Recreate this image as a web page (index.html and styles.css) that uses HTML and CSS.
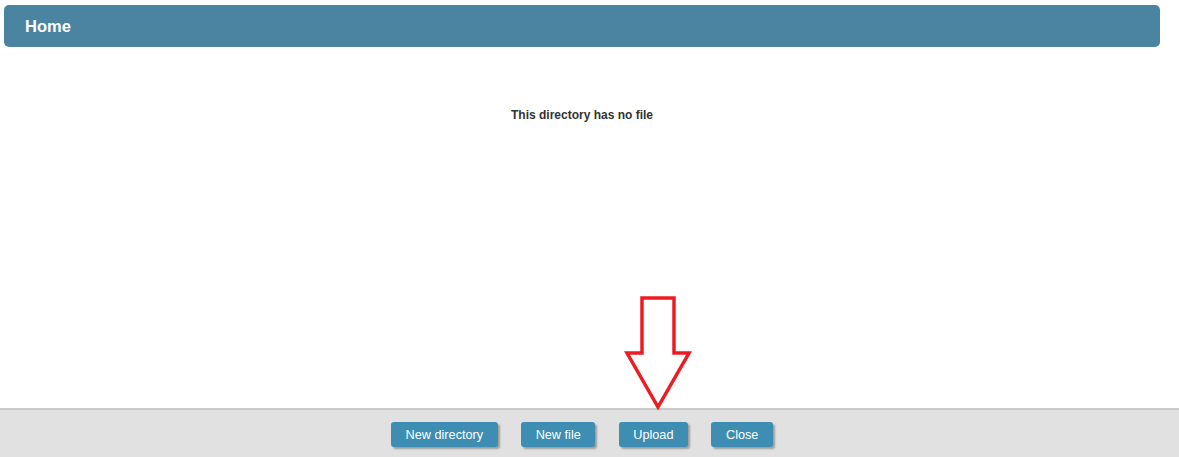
FILE: index.html
```html
<!DOCTYPE html>
<html>
<head>
<meta charset="utf-8">
<link rel="stylesheet" href="styles.css">
</head>
<body>
<div class="page">
  <div class="wrap">
    <header class="titlebar">Home</header>
    <main class="content">
      <p class="empty">This directory has no file</p>
    </main>
  </div>
  <footer class="footer">
    <div class="buttons">
      <button class="btn">New directory</button>
      <button class="btn">New file</button>
      <button class="btn">Upload</button>
      <button class="btn">Close</button>
    </div>
  </footer>
  <svg class="arrow" width="80" height="125" viewBox="620 290 80 125">
    <polygon points="642,298 674,298 674,353 689,353 658,407 627,353 642,353" fill="none" stroke="#ed1c24" stroke-width="3.5" stroke-linejoin="miter"/>
  </svg>
</div>
</body>
</html>
```
FILE: styles.css
```css
html, body {
  margin: 0;
  padding: 0;
  height: 100%;
  background: #fff;
  font-family: "Liberation Sans", Arial, sans-serif;
}
.page {
  position: relative;
  height: 457px;
  display: flex;
  flex-direction: column;
}
.wrap {
  flex: 1;
  padding: 5px 19px 0 4px;
  display: flex;
  flex-direction: column;
}
.titlebar {
  height: 42px;
  background: #4a84a1;
  border-radius: 5px;
  color: #fff;
  font-weight: bold;
  font-size: 16.5px;
  line-height: 42px;
  padding-left: 21px;
}
.content {
  flex: 1;
}
.empty {
  margin: 61px 0 0;
  text-align: center;
  font-size: 12px;
  font-weight: bold;
  color: #333;
}
.footer {
  height: 47px;
  border-top: 2px solid #c9c9c9;
  background: #e1e1e1;
  padding: 0 19px 0 4px;
}
.buttons {
  display: flex;
  justify-content: center;
  gap: 23.5px;
  padding-top: 12px;
}
.btn {
  height: 25px;
  padding: 0 14.5px;
  border: none;
  border-radius: 3px;
  background: #3e8db2;
  color: #fff;
  font-family: "Liberation Sans", Arial, sans-serif;
  font-size: 12.7px;
  box-shadow: 2px 2px 2px rgba(0, 0, 0, 0.3);
}
.arrow {
  position: absolute;
  left: 620px;
  top: 290px;
}
```
